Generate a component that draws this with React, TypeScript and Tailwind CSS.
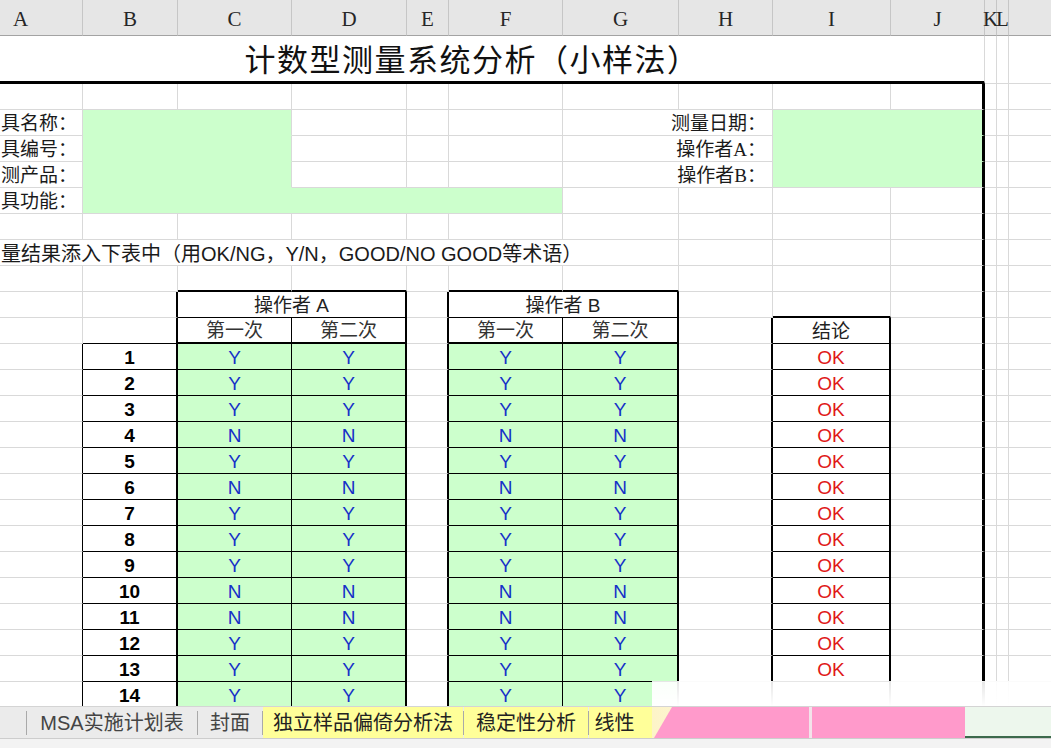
import React from 'react';

// column widths (each includes its right grid line)
const W = {
  A: 'w-[83px]',
  B: 'w-[95px]',
  C: 'w-[114px]',
  D: 'w-[115px]',
  E: 'w-[42px]',
  F: 'w-[114px]',
  G: 'w-[116px]',
  H: 'w-[94px]',
  I: 'w-[118px]',
  J: 'w-[94px]',
  K: 'w-[12px]',
  L: 'w-[12px]',
  M: 'flex-1',
  BC: 'w-[209px]',
  BF: 'w-[480px]',
  GH: 'w-[210px]',
  IJ: 'w-[212px]',
  AG: 'w-[679px]',
  AJ: 'w-[985px]',
  CD: 'w-[229px]',
  FG: 'w-[230px]',
};

const GR = 'border-r border-r-[#d9d9d9]';
const GB = 'border-b border-b-[#d9d9d9]';
const K1R = 'border-r border-r-black';
const K2R = 'border-r-2 border-r-black';
const K3R = 'border-r-[3px] border-r-black';
const K1B = 'border-b border-b-black';
const K2B = 'border-b-2 border-b-black';
const NGB = 'border-b border-b-[#ccffcc]';
const GREEN = 'bg-[#ccffcc]';
const SERIF = "[font-family:'Liberation_Serif',serif]";

const vals = ['Y', 'Y', 'Y', 'N', 'Y', 'N', 'Y', 'Y', 'Y', 'N', 'N', 'Y', 'Y', 'Y'];

interface CellProps {
  w: string;
  r?: string;
  b?: string;
  className?: string;
  children?: React.ReactNode;
}

function Cell({ w, r = GR, b = GB, className = '', children }: CellProps) {
  return (
    <div
      className={`${w} ${r} ${b} shrink-0 h-full flex items-center justify-center overflow-hidden whitespace-nowrap pt-[3px] ${className}`}
    >
      {children}
    </div>
  );
}

function Row({ children, h = 'h-[26px]' }: { children: React.ReactNode; h?: string }) {
  return <div className={`flex ${h}`}>{children}</div>;
}

// K, L, M tail of every row
function Tail() {
  return (
    <>
      <Cell w={W.K} />
      <Cell w={W.L} />
      <Cell w={W.M} r="" />
    </>
  );
}

function HeaderRow() {
  const hr = 'border-r border-r-[#c6c6c6]';
  const hb = 'border-b border-b-[#a3a3a3]';
  const letters: [string, string][] = [
    ['B', W.B], ['C', W.C], ['D', W.D], ['E', W.E], ['F', W.F], ['G', W.G],
    ['H', W.H], ['I', W.I], ['J', W.J], ['K', W.K], ['L', W.L],
  ];
  return (
    <div className={`flex h-[36px] bg-[#e6e6e6] text-[21px] text-[#262626] ${SERIF}`}>
      <Cell w={W.A} r={hr} b={hb} className="justify-start pl-[13px] pt-[4px]">A</Cell>
      {letters.map(([l, w]) => (
        <Cell key={l} w={w} r={hr} b={hb} className="pt-[4px] overflow-visible">{l}</Cell>
      ))}
      <Cell w={W.M} r="" b={hb} />
    </div>
  );
}

function LabelRight({ children }: { children: React.ReactNode }) {
  return (
    <Cell w={W.GH} className="justify-end pr-[6px] text-[19px] text-[#1a1a1a]">
      {children}
    </Cell>
  );
}

function DataRow({ i, v }: { i: number; v: string }) {
  const yn = 'text-[19px] text-[#1530c8]';
  return (
    <Row>
      <Cell w={W.A} r={K1R} />
      <Cell w={W.B} r={K2R} b={K1B} className="font-bold text-[19px] text-black">
        {i + 1}
      </Cell>
      <Cell w={W.C} r={K1R} b={K1B} className={`${GREEN} ${yn}`}>{v}</Cell>
      <Cell w={W.D} r={K2R} b={K1B} className={`${GREEN} ${yn}`}>{v}</Cell>
      <Cell w={W.E} r={K2R} />
      <Cell w={W.F} r={K1R} b={K1B} className={`${GREEN} ${yn}`}>{v}</Cell>
      <Cell w={W.G} r={K2R} b={K1B} className={`${GREEN} ${yn}`}>{v}</Cell>
      <Cell w={W.H} r={K2R} />
      <Cell w={W.I} r={K2R} b={K1B} className="text-[19px] text-[#e01818]">
        {i < 13 ? 'OK' : ''}
      </Cell>
      <Cell w={W.J} r={K3R} />
      <Tail />
    </Row>
  );
}

function BlankRow() {
  return (
    <Row>
      <Cell w={W.A} />
      <Cell w={W.B} />
      <Cell w={W.C} />
      <Cell w={W.D} />
      <Cell w={W.E} />
      <Cell w={W.F} />
      <Cell w={W.G} />
      <Cell w={W.H} />
      <Cell w={W.I} />
      <Cell w={W.J} r={K3R} />
      <Tail />
    </Row>
  );
}

function Sheet() {
  return (
    <div className="relative h-[706px] overflow-hidden bg-white">
      <HeaderRow />

      {/* title */}
      <Row h="h-[48px]">
        <Cell
          w={W.AJ}
          b="border-b-[3px] border-b-black"
          className="pr-[40px] pt-[6px] text-[31px] text-[#111] tracking-[1.5px]"
        >
          计数型测量系统分析（小样法）
        </Cell>
        <Tail />
      </Row>

      <BlankRow />

      {[
        ['具名称：', <>测量日期：</>],
        ['具编号：', <>操作者<span className={SERIF}>A</span>：</>],
        ['测产品：', <>操作者<span className={SERIF}>B</span>：</>],
      ].map(([left, right], idx) => (
        <Row key={idx}>
          <Cell w={W.A} className="justify-start pl-[1px] text-[19px] text-[#1a1a1a]">{left}</Cell>
          <Cell w={W.BC} b={NGB} className={GREEN} />
          <Cell w={W.D} />
          <Cell w={W.E} />
          <Cell w={W.F} />
          <LabelRight>{right}</LabelRight>
          <Cell w={W.IJ} r={K3R} b={idx < 2 ? NGB : GB} className={GREEN} />
          <Tail />
        </Row>
      ))}

      <Row>
        <Cell w={W.A} className="justify-start pl-[1px] text-[19px] text-[#1a1a1a]">具功能：</Cell>
        <Cell w={W.BF} className={GREEN} />
        <Cell w={W.G} />
        <Cell w={W.H} />
        <Cell w={W.I} />
        <Cell w={W.J} r={K3R} />
        <Tail />
      </Row>

      <BlankRow />

      <Row>
        <Cell w={W.AG} className="justify-start pl-[1px] text-[20px] text-[#1a1a1a]">
          量结果添入下表中（用OK/NG，Y/N，GOOD/NO GOOD等术语）
        </Cell>
        <Cell w={W.H} />
        <Cell w={W.I} />
        <Cell w={W.J} r={K3R} />
        <Tail />
      </Row>

      {/* row above the tables */}
      <Row>
        <Cell w={W.A} />
        <Cell w={W.B} />
        <Cell w={W.C} b={K2B} />
        <Cell w={W.D} b={K2B} />
        <Cell w={W.E} />
        <Cell w={W.F} b={K2B} />
        <Cell w={W.G} b={K2B} />
        <Cell w={W.H} />
        <Cell w={W.I} />
        <Cell w={W.J} r={K3R} />
        <Tail />
      </Row>

      <Row>
        <Cell w={W.A} />
        <Cell w={W.B} r={K2R} />
        <Cell w={W.CD} r={K2R} b={K1B} className="text-[19px] text-[#222]">
          操作者 A
        </Cell>
        <Cell w={W.E} r={K2R} />
        <Cell w={W.FG} r={K2R} b={K1B} className="text-[19px] text-[#222]">
          操作者 B
        </Cell>
        <Cell w={W.H} />
        <Cell w={W.I} b={K2B} />
        <Cell w={W.J} r={K3R} />
        <Tail />
      </Row>

      <Row>
        <Cell w={W.A} />
        <Cell w={W.B} r={K2R} b={K1B} />
        <Cell w={W.C} r={K1R} b={K2B} className="text-[19px] text-[#333]">第一次</Cell>
        <Cell w={W.D} r={K2R} b={K2B} className="text-[19px] text-[#333]">第二次</Cell>
        <Cell w={W.E} r={K2R} />
        <Cell w={W.F} r={K1R} b={K2B} className="text-[19px] text-[#333]">第一次</Cell>
        <Cell w={W.G} r={K2R} b={K2B} className="text-[19px] text-[#333]">第二次</Cell>
        <Cell w={W.H} r={K2R} />
        <Cell w={W.I} r={K2R} b={K1B} className="text-[19px] text-[#222]">结论</Cell>
        <Cell w={W.J} r={K3R} />
        <Tail />
      </Row>

      {vals.map((v, i) => (
        <DataRow key={i} i={i} v={v} />
      ))}

      {/* blurred-out patch over the last row */}
      <div className="absolute left-[652px] top-[681px] w-[399px] h-[25px] bg-gradient-to-b from-white/90 to-white" />
    </div>
  );
}

function Sep() {
  return <div className="w-px h-[24px] self-center bg-[#a9a9a9] shrink-0" />;
}

function TabBar() {
  const tab = 'flex items-center justify-center shrink-0 text-[20px] leading-none';
  return (
    <div className="h-[42px] flex flex-col bg-[#f2f2f2]">
      <div className="h-[32px] flex border-t border-t-[#d4d4d4] bg-[#ebebeb]">
        <div className="w-[26px] shrink-0" />
        <Sep />
        <div className={`${tab} w-[170px] text-[#444]`}>MSA实施计划表</div>
        <Sep />
        <div className={`${tab} w-[64px] text-[#444]`}>封面</div>
        <Sep />
        <div className={`${tab} w-[200px] bg-[#ffff99] text-[#222]`}>独立样品偏倚分析法</div>
        <Sep />
        <div className={`${tab} w-[124px] bg-[#ffff99] text-[#222]`}>稳定性分析</div>
        <Sep />
        <div className={`${tab} w-[63px] bg-[#ffff99] text-[#222] pr-[12px]`}>线性</div>
        <div className="w-[157px] shrink-0 bg-gradient-to-r from-[#fdf4c8] to-[#f8f8f8]">
          <div className="h-full bg-[#ff9acb] [clip-path:polygon(20px_0,100%_0,100%_100%,2px_100%)]" />
        </div>
        <div className="w-[3px] shrink-0 bg-[#f3e3ea]" />
        <div className="w-[153px] shrink-0 bg-[#ff9acb]" />
        <div className="flex-1 bg-[#edf7ed] border-b-2 border-b-[#3c6a4c]" />
      </div>
      <div className="flex-1 border-t border-t-[#cdcdcd] bg-[#f3f3f3]" />
    </div>
  );
}

export default function App() {
  return (
    <div className="w-[1051px] h-[748px] overflow-hidden bg-white [font-family:'Liberation_Sans','Noto_Sans_CJK_SC',sans-serif]">
      <Sheet />
      <TabBar />
    </div>
  );
}
